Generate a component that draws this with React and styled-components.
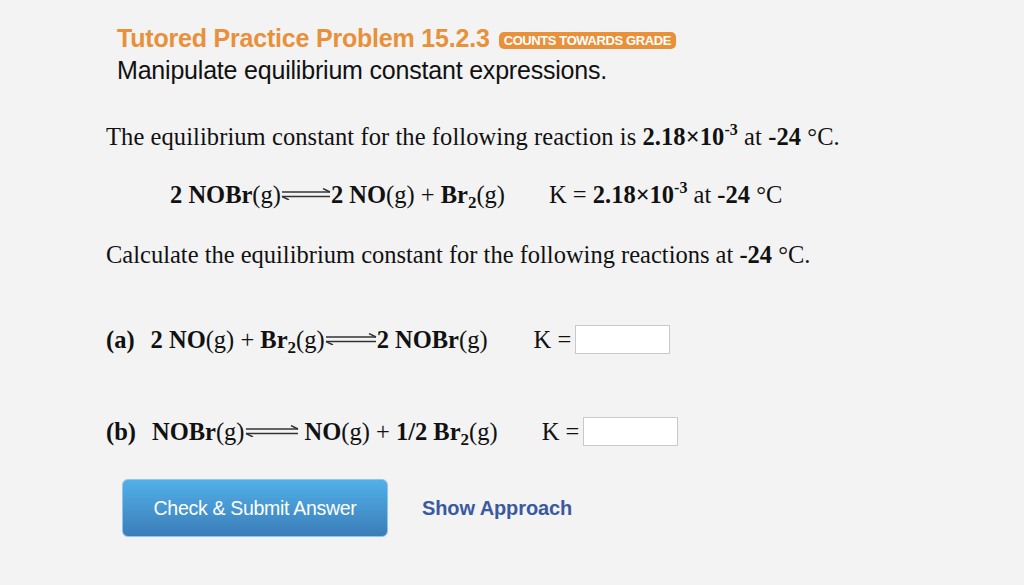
import React from 'react'
import styled, { createGlobalStyle } from 'styled-components'

const Global = createGlobalStyle`
  html, body {
    margin: 0;
    padding: 0;
    background: #f3f3f3;
  }
`

const Page = styled.div`
  width: 1024px;
  height: 585px;
  background: #f3f3f3;
  padding: 23px 0 0 106px;
  box-sizing: border-box;
  overflow: hidden;
`

const Header = styled.div`
  padding-left: 11px;
`

const TitleRow = styled.div`
  display: flex;
  align-items: center;
  gap: 9px;
  height: 30px;
`

const Title = styled.h1`
  margin: 0;
  font-family: "Liberation Sans", Arial, sans-serif;
  font-weight: bold;
  font-size: 25px;
  color: #e8903a;
  letter-spacing: -0.2px;
`

const Badge = styled.span`
  background: #e8903a;
  color: #fff;
  font-family: "Liberation Sans", Arial, sans-serif;
  font-weight: bold;
  font-size: 13px;
  line-height: 15px;
  letter-spacing: -0.4px;
  padding: 1px 5px 1px;
  border-radius: 5px;
  margin-top: 5px;
`

const Subtitle = styled.div`
  font-family: "Liberation Sans", Arial, sans-serif;
  font-size: 25px;
  line-height: 29px;
  color: #111;
  margin-top: 3px;
  letter-spacing: -0.2px;
`

const Text = styled.p`
  margin: ${p => p.$top || 0}px 0 0 ${p => p.$indent || 0}px;
  font-family: "Liberation Serif", "Times New Roman", serif;
  font-size: 24.5px;
  line-height: 30px;
  height: 30px;
  color: #111;
  white-space: nowrap;
  letter-spacing: ${p => p.$ls || 0}px;
`

const B = styled.b`
  font-weight: bold;
`

const Sup = styled.sup`
  font-size: 16px;
  font-weight: bold;
  line-height: 0;
  vertical-align: 0;
  position: relative;
  top: -10px;
`

const Sub = styled.sub`
  font-size: 17px;
  font-weight: bold;
  line-height: 0;
  vertical-align: 0;
  position: relative;
  top: 5px;
`

const Gap = styled.span`
  display: inline-block;
  width: ${p => p.$w}px;
`

const ArrowSvg = styled.svg`
  vertical-align: 3px;
`

const Input = styled.span`
  display: inline-block;
  width: 93px;
  height: 27px;
  background: #fff;
  border: 1px solid #c9c9c9;
  vertical-align: middle;
  margin: -6px 0 0 4px;
`

const Actions = styled.div`
  display: flex;
  align-items: center;
  gap: 34px;
  margin: 32px 0 0 16px;
`

const SubmitButton = styled.button`
  width: 266px;
  height: 58px;
  border: 1px solid #8ec5ec;
  border-radius: 6px;
  background: linear-gradient(#52b0e9, #3b7db8);
  color: #fff;
  font-family: "Liberation Sans", Arial, sans-serif;
  font-size: 19.5px;
  letter-spacing: -0.3px;
  cursor: pointer;
`

const LinkText = styled.a`
  font-family: "Liberation Sans", Arial, sans-serif;
  font-weight: bold;
  font-size: 20px;
  color: #3a59a0;
  letter-spacing: -0.1px;
  text-decoration: none;
`

const Eq = ({ w = 48 }) => (
  <ArrowSvg width={w} height="12" viewBox={`0 0 ${w} 12`}>
    <g stroke="#333" strokeWidth="1.4" fill="none">
      <line x1="1" y1="4" x2={w - 1} y2="4" />
      <line x1={w - 1} y1="4" x2={w - 8} y2="0.5" />
      <line x1="1" y1="8.5" x2={w - 1} y2="8.5" />
      <line x1="1" y1="8.5" x2="8" y2="12" />
    </g>
  </ArrowSvg>
)

export default function App() {
  return (
    <Page>
      <Global />
      <Header>
        <TitleRow>
          <Title>Tutored Practice Problem 15.2.3</Title>
          <Badge>COUNTS TOWARDS GRADE</Badge>
        </TitleRow>
        <Subtitle>Manipulate equilibrium constant expressions.</Subtitle>
      </Header>

      <Text $top={37} $ls={0.08}>
        The equilibrium constant for the following reaction is <B>2.18×10</B><Sup>-3</Sup> at <B>-24</B> °C.
      </Text>

      <Text $top={28} $indent={64}>
        <B>2 NOBr</B>(g)<Eq w={50} /><B>2 NO</B>(g) + <B>Br</B><Sub>2</Sub>(g)
        <Gap $w={44} />K = <B>2.18×10</B><Sup>-3</Sup> at <B>-24</B> °C
      </Text>

      <Text $top={30}>
        Calculate the equilibrium constant for the following reactions at <B>-24</B> °C.
      </Text>

      <Text $top={55}>
        <B>(a)</B><Gap $w={16} /><B>2 NO</B>(g) + <B>Br</B><Sub>2</Sub>(g)<Eq w={52} /><B>2 NOBr</B>(g)
        <Gap $w={46} />K =<Input />
      </Text>

      <Text $top={62}>
        <B>(b)</B><Gap $w={16} /><B>NOBr</B>(g)<Eq w={54} /><Gap $w={6} /><B>NO</B>(g) + <B>1/2 Br</B><Sub>2</Sub>(g)
        <Gap $w={44} />K =<Input />
      </Text>

      <Actions>
        <SubmitButton>Check &amp; Submit Answer</SubmitButton>
        <LinkText href="#">Show Approach</LinkText>
      </Actions>
    </Page>
  )
}
